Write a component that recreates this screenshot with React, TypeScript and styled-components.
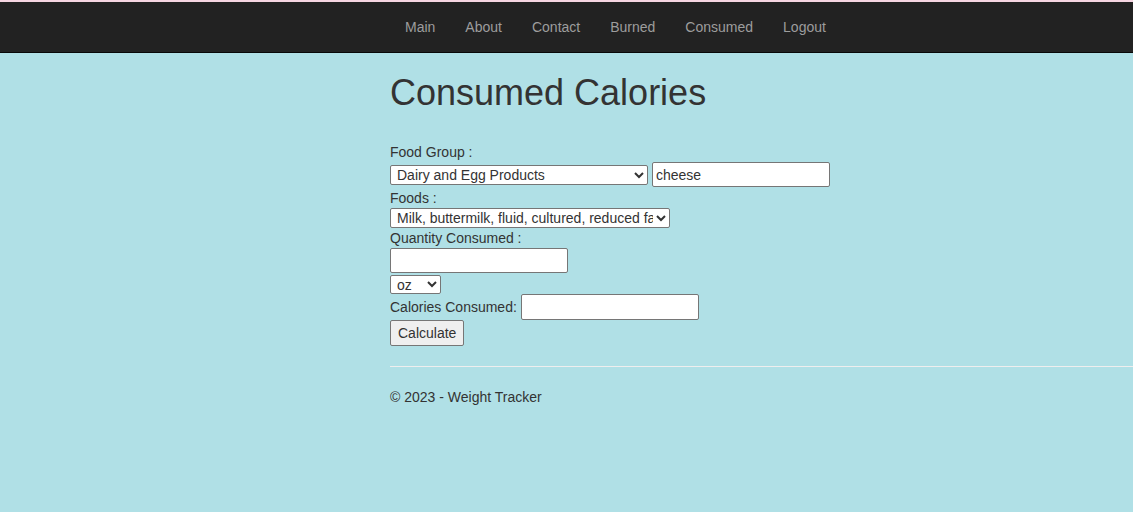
import React, { useState } from 'react';
import styled, { createGlobalStyle } from 'styled-components';

const GlobalStyle = createGlobalStyle`
  html, body {
    margin: 0;
    padding: 0;
    background-color: #b0e0e6;
    font-family: "Liberation Sans", Arial, Helvetica, sans-serif;
    font-size: 14px;
    line-height: 20px;
    color: #333;
  }
  * {
    box-sizing: border-box;
  }
`;

const Navbar = styled.nav`
  border-top: 2px solid #f6d6e2;
  background-color: #222;
  border-bottom: 1px solid #080808;
  height: 53px;
`;

const NavList = styled.ul`
  display: flex;
  list-style: none;
  margin: 0;
  padding: 0 0 0 390px;
  height: 50px;
`;

const NavLink = styled.a`
  display: block;
  padding: 15px;
  line-height: 20px;
  color: #9d9d9d;
  text-decoration: none;
  font-size: 14px;

  &:hover {
    color: #fff;
  }
`;

const Main = styled.main`
  padding-left: 390px;
`;

const Title = styled.h2`
  margin: 20px 0 0;
  font-size: 36px;
  font-weight: 500;
  line-height: 39px;
  color: #333;
`;

const Form = styled.form`
  display: flex;
  flex-direction: column;
  align-items: flex-start;
  margin-top: 30px;
`;

const Label = styled.label`
  display: block;
  height: 20px;
  line-height: 20px;
`;

const Row = styled.div<{ $gap?: number; $after?: number }>`
  display: flex;
  align-items: center;
  gap: ${(p) => p.$gap ?? 4}px;
  margin-bottom: ${(p) => p.$after ?? 0}px;
`;

const Select = styled.select<{ $width: number; $height?: number }>`
  width: ${(p) => p.$width}px;
  height: ${(p) => p.$height ?? 20}px;
  font-family: "Liberation Sans", Arial, sans-serif;
  font-size: 14px;
  color: #333;
  background-color: #fff;
  border: 1px solid #767676;
  border-radius: 2px;
  padding: 0 0 0 2px;
  margin: 0;
`;

const TextInput = styled.input<{ $width: number; $height?: number }>`
  width: ${(p) => p.$width}px;
  height: ${(p) => p.$height ?? 25}px;
  font-family: "Liberation Sans", Arial, sans-serif;
  font-size: 14px;
  color: #333;
  background-color: #fff;
  border: 1px solid #767676;
  border-radius: 2px;
  padding: 1px 3px;
  margin: 0;
`;

const Button = styled.button`
  height: 26px;
  padding: 0 7px;
  font-family: "Liberation Sans", Arial, sans-serif;
  font-size: 14px;
  color: #333;
  background-color: #efefef;
  border: 1px solid #767676;
  border-radius: 2px;
  margin: 0;
`;

const Rule = styled.hr`
  margin: 20px 0 0 390px;
  border: 0;
  border-top: 1px solid #eee;
`;

const Footer = styled.footer`
  padding-left: 390px;
  margin-top: 20px;
  line-height: 20px;
`;

const navItems = ['Main', 'About', 'Contact', 'Burned', 'Consumed', 'Logout'];

const App: React.FC = () => {
  const [group, setGroup] = useState('dairy');
  const [search, setSearch] = useState('cheese');
  const [food, setFood] = useState('milk');
  const [qty, setQty] = useState('');
  const [unit, setUnit] = useState('oz');
  const [calories, setCalories] = useState('');

  return (
    <>
      <GlobalStyle />
      <Navbar>
        <NavList>
          {navItems.map((item) => (
            <li key={item}>
              <NavLink href="#">{item}</NavLink>
            </li>
          ))}
        </NavList>
      </Navbar>
      <Main>
        <Title>Consumed Calories</Title>
        <Form onSubmit={(e) => e.preventDefault()}>
          <Label>Food Group :</Label>
          <Row $after={1}>
            <Select $width={258} value={group} onChange={(e) => setGroup(e.target.value)}>
              <option value="dairy">Dairy and Egg Products</option>
              <option value="fruits">Fruits and Fruit Juices</option>
              <option value="veg">Vegetables and Vegetable Products</option>
            </Select>
            <TextInput $width={178} value={search} onChange={(e) => setSearch(e.target.value)} />
          </Row>
          <Label>Foods :</Label>
          <Select $width={280} value={food} onChange={(e) => setFood(e.target.value)}>
            <option value="milk">Milk, buttermilk, fluid, cultured, reduced fat</option>
            <option value="cheddar">Cheese, cheddar</option>
          </Select>
          <Label>Quantity Consumed :</Label>
          <TextInput $width={178} value={qty} onChange={(e) => setQty(e.target.value)} />
          <Select $width={51} $height={19} style={{ marginTop: 2 }} value={unit} onChange={(e) => setUnit(e.target.value)}>
            <option value="oz">oz</option>
            <option value="g">g</option>
            <option value="cup">cup</option>
          </Select>
          <Row $gap={4}>
            <Label>Calories Consumed:</Label>
            <TextInput $width={178} $height={26} value={calories} onChange={(e) => setCalories(e.target.value)} />
          </Row>
          <Button type="submit">Calculate</Button>
        </Form>
      </Main>
      <Rule />
      <Footer>© 2023 - Weight Tracker</Footer>
    </>
  );
};

export default App;
